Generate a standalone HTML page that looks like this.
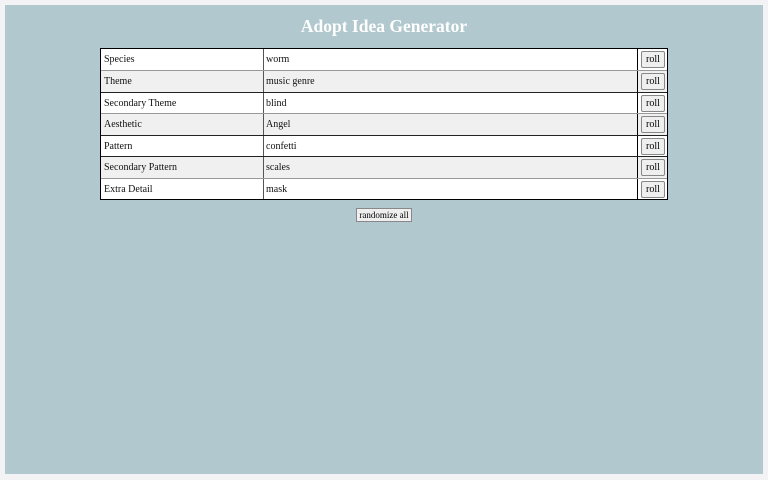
<!DOCTYPE html>
<html><head><meta charset="utf-8"><style>
html,body{margin:0;padding:0;width:768px;height:480px;background:#f3f3f5;overflow:hidden}
#box{position:absolute;left:5px;top:5px;width:758px;height:469px;background:#b0c8ce}
h1{position:absolute;left:0;top:16px;width:768px;margin:0;text-align:center;font:bold 17.5px "Liberation Serif",serif;color:#fff}
.t{position:absolute;left:100px;top:48px;width:566px;border:1px solid #000;font:10px "Liberation Serif",serif;color:#111}
.r{position:relative;height:20.5px;border-top:1px solid #999;background:#fff}
.r:first-child{border-top:none;height:21px}
.r.g{background:#f0f0f0}
.r.k{border-top-color:#222}
.c1{position:absolute;left:3px;top:5px}
.c2{position:absolute;left:165px;top:5px}
.l1{position:absolute;left:162px;top:0;bottom:0;width:1px;background:#555}
.l2{position:absolute;left:536px;top:0;bottom:0;width:1px;background:#000}
.btn{position:absolute;left:540px;top:2px;width:22px;height:15px;border:1px solid #888;border-radius:2px;background:#efefef;font:10px "Liberation Serif",serif;text-align:center;line-height:15px;color:#000}
#ra{position:absolute;left:356px;top:208px;width:54px;height:12px;border:1px solid #888;background:#efefef;font:9px "Liberation Serif",serif;text-align:center;line-height:12px;color:#000}
</style></head><body>
<div id="box"></div>
<h1>Adopt Idea Generator</h1>
<div class="t">
<div class="r"><span class="c1">Species</span><span class="c2">worm</span><div class="l1"></div><div class="l2"></div><div class="btn">roll</div></div>
<div class="r g"><span class="c1">Theme</span><span class="c2">music genre</span><div class="l1"></div><div class="l2"></div><div class="btn">roll</div></div>
<div class="r k"><span class="c1">Secondary Theme</span><span class="c2">blind</span><div class="l1"></div><div class="l2"></div><div class="btn">roll</div></div>
<div class="r g"><span class="c1">Aesthetic</span><span class="c2">Angel</span><div class="l1"></div><div class="l2"></div><div class="btn">roll</div></div>
<div class="r k"><span class="c1">Pattern</span><span class="c2">confetti</span><div class="l1"></div><div class="l2"></div><div class="btn">roll</div></div>
<div class="r g k"><span class="c1">Secondary Pattern</span><span class="c2">scales</span><div class="l1"></div><div class="l2"></div><div class="btn">roll</div></div>
<div class="r"><span class="c1">Extra Detail</span><span class="c2">mask</span><div class="l1"></div><div class="l2"></div><div class="btn">roll</div></div>
</div>
<div id="ra">randomize all</div>
</body></html>
